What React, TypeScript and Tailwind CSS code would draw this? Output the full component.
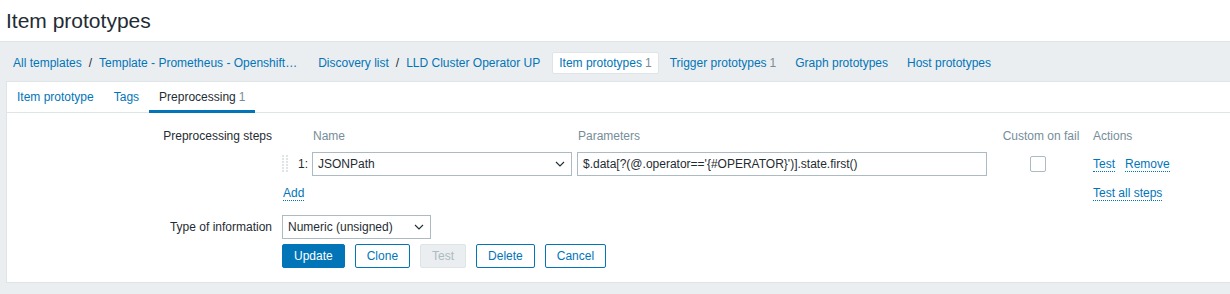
import React from 'react';

// Zabbix-like "Item prototypes" edit form, Preprocessing tab

const FONT = { fontFamily: '"Liberation Sans", Arial, sans-serif' };

const Chevron: React.FC = () => (
  <svg width="10" height="6" viewBox="0 0 10 6" className="shrink-0">
    <path d="M1 1l4 4 4-4" fill="none" stroke="#1f2c33" strokeWidth="1.1" />
  </svg>
);

const DragHandle: React.FC = () => (
  <svg width="7" height="18" viewBox="0 0 7 18">
    {[0, 3, 6, 9, 12, 15].map((y) => (
      <g key={y}>
        <rect x="0" y={y} width="2" height="2" fill="#dfe4e7" />
        <rect x="4" y={y} width="2" height="2" fill="#dfe4e7" />
      </g>
    ))}
  </svg>
);

const Select: React.FC<{ value: string; width: string }> = ({ value, width }) => (
  <div
    className={`${width} h-[24px] border border-[#acbbc2] bg-white flex items-center justify-between pl-[5px] pr-[6px] text-[#1f2c33]`}
  >
    <span>{value}</span>
    <Chevron />
  </div>
);

const LinkBtn: React.FC<{ children: React.ReactNode }> = ({ children }) => (
  <span className="text-[#0275b8] border-b border-dotted border-[#0275b8] leading-[14px]">{children}</span>
);

const Crumb: React.FC<{ children: React.ReactNode; active?: boolean }> = ({ children, active }) => (
  <div
    className={`h-[22px] px-[6px] flex items-center ${active ? 'bg-white border border-[#dfe4e7] rounded-[2px] px-[5px]' : ''}`}
  >
    {children}
  </div>
);

const Slash: React.FC = () => (
  <span className="text-[#1f2c33] h-[22px] flex items-center mx-[1px]">/</span>
);

export default function App() {
  return (
    <div className="w-[1230px] h-[294px] overflow-hidden bg-[#ebeef0] text-[12px] text-[#1f2c33]" style={FONT}>
      {/* Header */}
      <div className="h-[41px] bg-white flex items-center pl-[6px] pt-[1px]">
        <h1 className="text-[21px] leading-[24px] text-[#1f2c33]">Item prototypes</h1>
      </div>

      <div className="border-t border-[#dfe4e7]">
        {/* Breadcrumbs */}
        <div className="h-[39px] pt-[10px] pl-[7px] flex items-start text-[#0275b8]">
          <Crumb>All templates</Crumb>
          <Slash />
          <Crumb>Template - Prometheus - Openshift…</Crumb>
          <div className="w-[9px]" />
          <Crumb>Discovery list</Crumb>
          <Slash />
          <Crumb>LLD Cluster Operator UP</Crumb>
          <div className="w-[6px]" />
          <Crumb active>
            Item prototypes<span className="text-[#768d99] ml-[3px]">1</span>
          </Crumb>
          <div className="w-[5px]" />
          <Crumb>
            Trigger prototypes<span className="text-[#768d99] ml-[3px]">1</span>
          </Crumb>
          <div className="w-[7px]" />
          <Crumb>Graph prototypes</Crumb>
          <div className="w-[7px]" />
          <Crumb>Host prototypes</Crumb>
        </div>

        {/* Panel */}
        <div className="ml-[6px] bg-white border border-r-0 border-[#dfe4e7] pb-[14px]">
          {/* Tabs */}
          <div className="h-[31px] border-b border-[#dfe4e7] flex items-stretch">
            <div className="px-[10px] flex items-center text-[#0275b8]">Item prototype</div>
            <div className="px-[10px] flex items-center text-[#0275b8]">Tags</div>
            <div className="relative px-[10px] flex items-center text-[#1f2c33]">
              Preprocessing<span className="text-[#768d99] ml-[3px]">1</span>
              <div className="absolute left-0 right-0 bottom-[-1px] h-[3px] bg-[#0275b8]" />
            </div>
          </div>

          {/* Form */}
          <div className="pt-[10px]">
            {/* Preprocessing steps */}
            <div className="flex">
              <div className="w-[265px] h-[24px] pt-[1px] flex items-center justify-end">Preprocessing steps</div>
              <div className="ml-[10px]">
                {/* header */}
                <div className="h-[24px] pt-[1px] flex items-center text-[#768d99]">
                  <div className="w-[30px]" />
                  <div className="w-[265px] pl-[1px]">Name</div>
                  <div className="w-[410px] pl-[1px]">Parameters</div>
                  <div className="w-[106px] flex justify-center pl-[2px]">Custom on fail</div>
                  <div>Actions</div>
                </div>
                {/* step row */}
                <div className="h-[24px] mt-[5px] flex items-center">
                  <div className="w-[30px] flex items-center justify-between pr-[4px]">
                    <DragHandle />
                    <span>1:</span>
                  </div>
                  <Select value="JSONPath" width="w-[260px]" />
                  <div className="w-[5px]" />
                  <div className="w-[410px] h-[24px] border border-[#acbbc2] flex items-center pl-[5px]">
                    $.data[?(@.operator=='{'{'}#OPERATOR{'}'}')].state.first()
                  </div>
                  <div className="w-[106px] flex justify-center pr-[4px]">
                    <div className="w-[16px] h-[16px] border border-[#acbbc2] rounded-[2px] bg-white" />
                  </div>
                  <div className="flex gap-[10px]">
                    <LinkBtn>Test</LinkBtn>
                    <LinkBtn>Remove</LinkBtn>
                  </div>
                </div>
                {/* add row */}
                <div className="h-[24px] mt-[5px] flex items-center">
                  <div className="w-[811px] pl-[1px]">
                    <LinkBtn>Add</LinkBtn>
                  </div>
                  <LinkBtn>Test all steps</LinkBtn>
                </div>
              </div>
            </div>

            {/* Type of information */}
            <div className="flex mt-[10px]">
              <div className="w-[265px] h-[24px] flex items-center justify-end">Type of information</div>
              <div className="ml-[10px]">
                <Select value="Numeric (unsigned)" width="w-[149px]" />
              </div>
            </div>

            {/* Buttons */}
            <div className="flex mt-[5px] ml-[275px] gap-[10px]">
              <button className="h-[24px] px-[11px] rounded-[2px] bg-[#0275b8] border border-[#0275b8] text-white">
                Update
              </button>
              <button className="h-[24px] px-[11px] rounded-[2px] bg-white border border-[#0275b8] text-[#0275b8]">
                Clone
              </button>
              <button className="h-[24px] px-[11px] rounded-[2px] bg-[#ebeef0] border border-[#dfe4e7] text-[#acbbc2]">
                Test
              </button>
              <button className="h-[24px] px-[11px] rounded-[2px] bg-white border border-[#0275b8] text-[#0275b8]">
                Delete
              </button>
              <button className="h-[24px] px-[11px] rounded-[2px] bg-white border border-[#0275b8] text-[#0275b8]">
                Cancel
              </button>
            </div>
          </div>
        </div>
      </div>
    </div>
  );
}
